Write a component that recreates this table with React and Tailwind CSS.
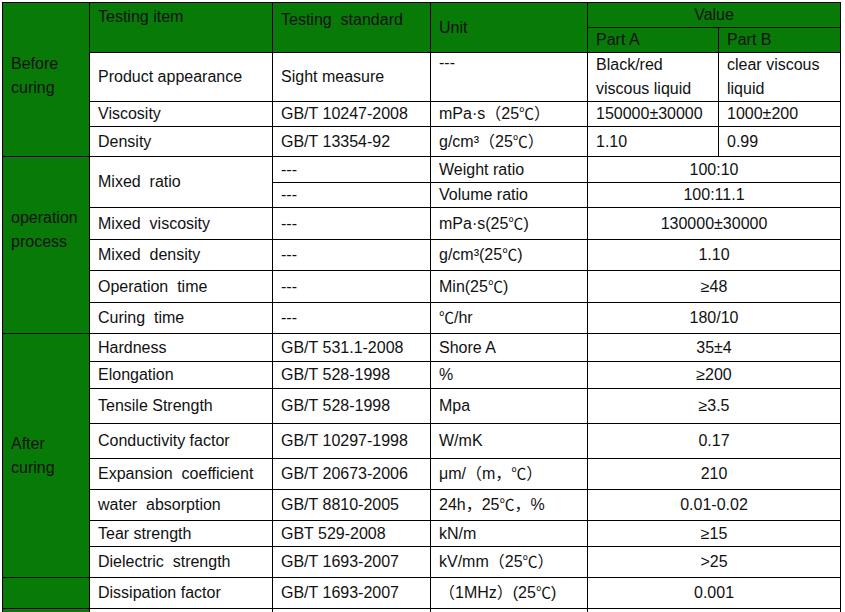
import React from "react";

const green = "bg-[#077a07]";

// render ℃ with the CJK face, like the source doc
function T({ s }) {
  if (typeof s !== "string") return s;
  const parts = s.split(/(℃)/);
  return parts.map((p, i) =>
    p === "℃" ? (
      <span key={i} className="font-['Noto_Sans_CJK_SC',sans-serif] text-[15px]">
        ℃
      </span>
    ) : (
      p
    )
  );
}

function Td({ children, className = "", ...rest }) {
  return (
    <td
      {...rest}
      className={`border border-black px-2 align-middle whitespace-pre ${className}`}
    >
      <T s={children} />
    </td>
  );
}

function Side({ children, rowSpan }) {
  return (
    <td
      rowSpan={rowSpan}
      className={`border border-black ${green} px-2 align-middle text-[#111] leading-6`}
    >
      {children}
    </td>
  );
}

function Row({ h, item, std, unit, value }) {
  return (
    <tr className={h}>
      <Td>{item}</Td>
      <Td>{std}</Td>
      <Td>{unit}</Td>
      <Td colSpan={2} className="text-center">
        {value}
      </Td>
    </tr>
  );
}

export default function App() {
  return (
    <div className="bg-white w-[845px] h-[612px] overflow-hidden pt-[2px] pl-[2px] font-['Liberation_Sans','Noto_Sans_CJK_SC',sans-serif] text-[16px] text-[#111]">
      <table className="border-collapse table-fixed w-[838px]">
        <colgroup>
          <col className="w-[87px]" />
          <col className="w-[183px]" />
          <col className="w-[158px]" />
          <col className="w-[157px]" />
          <col className="w-[131px]" />
          <col className="w-[122px]" />
        </colgroup>
        <tbody>
          {/* header */}
          <tr className="h-[25px]">
            <Side rowSpan={5}>
              <div className="pb-[8px]">
                Before
                <br />
                curing
              </div>
            </Side>
            <Td rowSpan={2} className={`${green} align-top pt-[2px]`}>
              Testing item
            </Td>
            <Td rowSpan={2} className={`${green} align-top pt-[5px]`}>
              Testing  standard
            </Td>
            <Td rowSpan={2} className={green}>
              Unit
            </Td>
            <Td colSpan={2} className={`${green} text-center`}>
              Value
            </Td>
          </tr>
          <tr className="h-[23px]">
            <Td className={green}>Part A</Td>
            <Td className={green}>Part B</Td>
          </tr>
          <tr className="h-[48px]">
            <Td>Product appearance</Td>
            <Td>Sight measure</Td>
            <Td className="align-top leading-5">---</Td>
            <Td className="leading-6">
              <>
                Black/red
                <br />
                viscous liquid
              </>
            </Td>
            <Td className="leading-6">
              <>
                clear viscous
                <br />
                liquid
              </>
            </Td>
          </tr>
          <tr className="h-[24px]">
            <Td>Viscosity</Td>
            <Td>GB/T 10247-2008</Td>
            <Td>mPa·s（25℃）</Td>
            <Td>150000±30000</Td>
            <Td>1000±200</Td>
          </tr>
          <tr className="h-[30px]">
            <Td>Density</Td>
            <Td>GB/T 13354-92</Td>
            <Td>g/cm³（25℃）</Td>
            <Td>1.10</Td>
            <Td>0.99</Td>
          </tr>

          {/* operation process */}
          <tr className="h-[26px]">
            <Side rowSpan={6}>
              <div className="pb-[30px]">
                operation
                <br />
                process
              </div>
            </Side>
            <Td rowSpan={2}>Mixed  ratio</Td>
            <Td>---</Td>
            <Td>Weight ratio</Td>
            <Td colSpan={2} className="text-center">
              100:10
            </Td>
          </tr>
          <tr className="h-[23px]">
            <Td>---</Td>
            <Td>Volume ratio</Td>
            <Td colSpan={2} className="text-center">
              100:11.1
            </Td>
          </tr>
          <Row h="h-[32px]" item="Mixed  viscosity" std="---" unit="mPa·s(25℃)" value="130000±30000" />
          <Row h="h-[31px]" item="Mixed  density" std="---" unit="g/cm³(25℃)" value="1.10" />
          <Row h="h-[32px]" item="Operation  time" std="---" unit="Min(25℃)" value="≥48" />
          <Row h="h-[31px]" item="Curing  time" std="---" unit="℃/hr" value="180/10" />

          {/* after curing */}
          <tr className="h-[28px]">
            <Side rowSpan={8}>
              After
              <br />
              curing
            </Side>
            <Td>Hardness</Td>
            <Td>GB/T 531.1-2008</Td>
            <Td>Shore A</Td>
            <Td colSpan={2} className="text-center">
              35±4
            </Td>
          </tr>
          <Row h="h-[27px]" item="Elongation" std="GB/T 528-1998" unit="%" value="≥200" />
          <Row h="h-[35px]" item="Tensile Strength" std="GB/T 528-1998" unit="Mpa" value="≥3.5" />
          <Row h="h-[35px]" item="Conductivity factor" std="GB/T 10297-1998" unit="W/mK" value="0.17" />
          <Row h="h-[31px]" item="Expansion  coefficient" std="GB/T 20673-2006" unit="μm/（m，℃）" value="210" />
          <Row h="h-[31px]" item="water  absorption" std="GB/T 8810-2005" unit="24h，25℃，%" value="0.01-0.02" />
          <Row h="h-[26px]" item="Tear strength" std="GBT 529-2008" unit="kN/m" value="≥15" />
          <Row h="h-[31px]" item="Dielectric  strength" std="GB/T 1693-2007" unit="kV/mm（25℃）" value=">25" />

          <tr className="h-[31px]">
            <Side rowSpan={1}></Side>
            <Td>Dissipation factor</Td>
            <Td>GB/T 1693-2007</Td>
            <Td>（1MHz）(25℃)</Td>
            <Td colSpan={2} className="text-center">
              0.001
            </Td>
          </tr>
          <tr className="h-[30px]">
            <Side rowSpan={1}></Side>
            <Td></Td>
            <Td></Td>
            <Td></Td>
            <Td colSpan={2}></Td>
          </tr>
        </tbody>
      </table>
    </div>
  );
}
